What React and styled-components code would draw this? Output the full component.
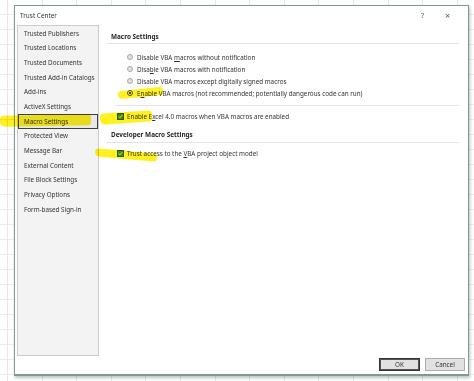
import React from 'react';
import styled, { createGlobalStyle } from 'styled-components';

const GlobalStyle = createGlobalStyle`
    html, body {
        margin: 0;
        padding: 0;
    }

    body {
        width: 474px;
        height: 381px;
        overflow: hidden;
        font-family: "Noto Sans", "Open Sans", sans-serif;
        color: #262626;
        background-color: #fff;
        background-image:
            repeating-linear-gradient(to right, transparent 0, transparent 7px, #e6e6e6 7px, #e6e6e6 8px, transparent 8px, transparent 34.6px),
            repeating-linear-gradient(to bottom, transparent 0, transparent 14px, #ededed 14px, #ededed 15px);
    }
`;

const Page = styled.div`
    position: relative;
    width: 474px;
    height: 381px;
    padding: 5px 0 0 14px;
    box-sizing: border-box;
`;

const Dialog = styled.div`
    width: 455px;
    height: 371px;
    box-sizing: border-box;
    display: flex;
    flex-direction: column;
    background: #fff;
    border: 1px solid #7d9b93;
    border-bottom-width: 2px;
    box-shadow: 1px 2px 3px rgba(60, 80, 70, 0.35);
`;

const TitleBar = styled.div`
    height: 18px;
    display: flex;
    align-items: center;
    padding: 0 8px 1px 5px;
    font-size: 6.4px;
    color: #333;
`;

const TitleText = styled.div`
    flex: 1;
`;

const TitleButton = styled.div`
    width: 25px;
    text-align: center;
    font-size: ${props => props.$size || 7}px;
    color: #555;
`;

const Body = styled.div`
    display: flex;
    padding-left: 2px;
    height: 331px;
`;

const Nav = styled.div`
    width: 82px;
    box-sizing: border-box;
    background: #f3f3f3;
    border: 1px solid #cbcbcb;
    display: flex;
    flex-direction: column;
`;

const NavItem = styled.div`
    height: 14.67px;
    box-sizing: border-box;
    display: flex;
    align-items: center;
    padding-left: ${props => props.$active ? 5 : 6}px;
    font-size: 6.3px;
    color: #333;
    border: ${props => props.$active ? '1px solid #3f3f3f' : 'none'};
    background: ${props => props.$active ? '#e8e8e8' : 'transparent'};
`;

const Content = styled.div`
    flex: 1;
    padding: 4px 9px 0 8px;
    display: flex;
    flex-direction: column;
`;

const Heading = styled.div`
    height: ${props => props.$h || 14}px;
    display: flex;
    align-items: center;
    padding-left: 4px;
    font-size: 6.4px;
    font-weight: 700;
    border-bottom: 1px solid #e4e4e4;
    margin-top: ${props => props.$mt || 0}px;
`;

const Separator = styled.div`
    height: 1px;
    background: #e4e4e4;
    margin: 6px 0 4px 8px;
`;

const RadioGroup = styled.div`
    padding-top: 7px;
    display: flex;
    flex-direction: column;
`;

const OptionRow = styled.div`
    height: 12px;
    display: flex;
    align-items: center;
    gap: ${props => props.$gap || 4}px;
    padding-left: ${props => props.$indent || 20}px;
    font-size: 6.3px;
    color: #333;
    margin-top: ${props => props.$mt || 0}px;
`;

const Radio = styled.span`
    width: 6px;
    height: 6px;
    box-sizing: border-box;
    border-radius: 50%;
    border: 1px solid ${props => props.$on ? '#555' : '#a8a8a8'};
    background: ${props => props.$on ? '#fff' : '#e2e2e2'};
    display: flex;
    align-items: center;
    justify-content: center;

    &::after {
        content: '';
        width: 2.5px;
        height: 2.5px;
        border-radius: 50%;
        background: ${props => props.$on ? '#111' : 'transparent'};
    }
`;

const CheckBox = styled.span`
    width: 7px;
    height: 7px;
    box-sizing: border-box;
    background: #3f8f3a;
    border: 1px solid #2a5f27;
    display: flex;
    align-items: center;
    justify-content: center;
`;

const Key = styled.span`
    text-decoration: underline;
    text-underline-offset: 1px;
`;

const Footer = styled.div`
    display: flex;
    justify-content: flex-end;
    gap: 5px;
    margin-top: 2px;
    padding-right: 3px;
`;

const Button = styled.div`
    width: ${props => props.$w || 40}px;
    height: 13px;
    box-sizing: border-box;
    display: flex;
    align-items: center;
    justify-content: center;
    font-size: 6.3px;
    color: #333;
    background: #e1e1e1;
    border: 1px solid ${props => props.$primary ? '#333' : '#adadad'};
    box-shadow: ${props => props.$primary ? 'inset 0 0 0 1px #555' : 'none'};
`;

const Marker = styled.div`
    position: absolute;
    background: rgba(255, 238, 0, 0.88);
    mix-blend-mode: multiply;
    border-radius: 4px 3px 3px 5px;
    pointer-events: none;
`;

const Check = () => (
    <svg width="5" height="5" viewBox="0 0 10 10">
        <polyline points="1.5,5 4,7.5 8.5,2.5" fill="none" stroke="#fff" strokeWidth="2" />
    </svg>
);

const navItems = [
    'Trusted Publishers',
    'Trusted Locations',
    'Trusted Documents',
    'Trusted Add-in Catalogs',
    'Add-ins',
    'ActiveX Settings',
    'Macro Settings',
    'Protected View',
    'Message Bar',
    'External Content',
    'File Block Settings',
    'Privacy Options',
    'Form-based Sign-in'
];

const markers = [
    { left: 0, top: 115, width: 91, height: 11, rotate: -1 },
    { left: 118, top: 89, width: 45, height: 8, rotate: -6 },
    { left: 100, top: 112, width: 52, height: 11, rotate: -4 },
    { left: 95, top: 151, width: 62, height: 8, rotate: 5 }
];

const App = () => (
    <>
        <GlobalStyle />
        <Page>
            <Dialog>
                <TitleBar>
                    <TitleText>Trust Center</TitleText>
                    <TitleButton>?</TitleButton>
                    <TitleButton $size={9}>×</TitleButton>
                </TitleBar>
                <Body>
                    <Nav>
                        {navItems.map(item => (
                            <NavItem key={item} $active={item === 'Macro Settings'}>{item}</NavItem>
                        ))}
                    </Nav>
                    <Content>
                        <Heading>Macro Settings</Heading>
                        <RadioGroup>
                            <OptionRow>
                                <Radio />
                                <span>Disable VBA <Key>m</Key>acros without notification</span>
                            </OptionRow>
                            <OptionRow>
                                <Radio />
                                <span>Disa<Key>b</Key>le VBA macros with notification</span>
                            </OptionRow>
                            <OptionRow>
                                <Radio />
                                <span>Disable VBA macros except digitally signed macros</span>
                            </OptionRow>
                            <OptionRow>
                                <Radio $on />
                                <span>E<Key>n</Key>able VBA macros (not recommended; potentially dangerous code can run)</span>
                            </OptionRow>
                        </RadioGroup>
                        <Separator />
                        <OptionRow $indent={10} $gap={3}>
                            <CheckBox><Check /></CheckBox>
                            <span>Enable E<Key>x</Key>cel 4.0 macros when VBA macros are enabled</span>
                        </OptionRow>
                        <Heading $h={15} $mt={5}>Developer Macro Settings</Heading>
                        <OptionRow $indent={10} $gap={3} $mt={4}>
                            <CheckBox><Check /></CheckBox>
                            <span>Trust access to the <Key>V</Key>BA project object model</span>
                        </OptionRow>
                    </Content>
                </Body>
                <Footer>
                    <Button $primary $w={41}>OK</Button>
                    <Button>Cancel</Button>
                </Footer>
            </Dialog>
            {markers.map((m, i) => (
                <Marker
                    key={i}
                    style={{ left: m.left, top: m.top, width: m.width, height: m.height, transform: `rotate(${m.rotate}deg)` }}
                />
            ))}
        </Page>
    </>
);

export default App;
